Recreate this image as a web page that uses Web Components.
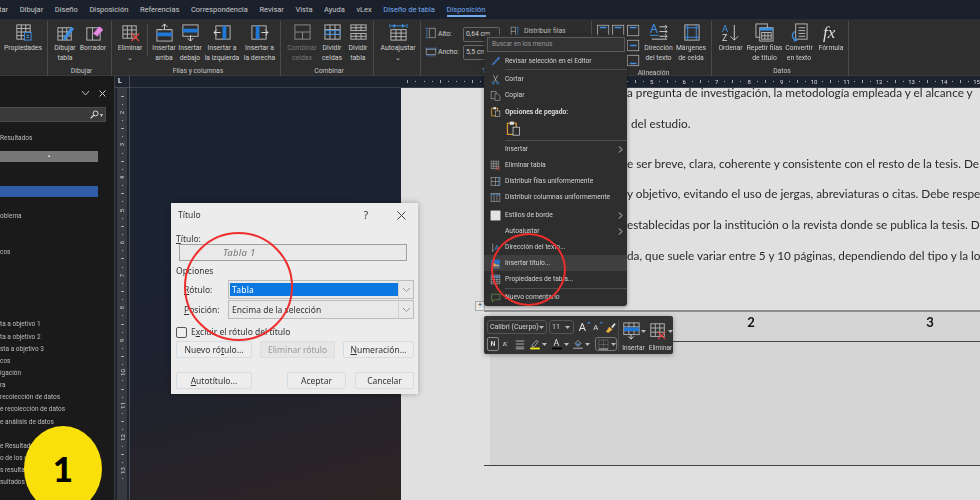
<!DOCTYPE html>
<html lang="es">
<head>
<meta charset="utf-8">
<title>Título</title>
<style>
  html, body { margin: 0; height: 100%; background: #1a1a1a; overflow: hidden; }
  body { font-family: Roboto, "Noto Sans", sans-serif; }
</style>
</head>
<body>
<word-app></word-app>
<script>
// little svg helpers, icons are all on a 20x20 box
const G = '#b9b9b9', B = '#3f8fe0', R = '#e5403a';
function grid(x, y, w, h, c, r, col) {
  let s = `<rect x="${x}" y="${y}" width="${w}" height="${h}" fill="none" stroke="${col}"/>`;
  for (let i = 1; i < c; i++) s += `<path d="M${x + w * i / c} ${y}v${h}" stroke="${col}"/>`;
  for (let i = 1; i < r; i++) s += `<path d="M${x} ${y + h * i / r}h${w}" stroke="${col}"/>`;
  return s;
}
const X = (x, y, n) => `<path d="M${x} ${y}l${n} ${n}M${x + n} ${y}l${-n} ${n}" stroke="${R}" stroke-width="1.3"/>`;
const ICONS = {
  props: grid(3, 2, 14, 15, 3, 4, G) + `<rect x="11" y="10" width="7" height="8" fill="#2e2e2e" stroke="${B}"/><path d="M13 13h3M13 15h3" stroke="${B}"/>`,
  draw: grid(2, 5, 14, 13, 3, 3, G) + `<path d="M8 15L16 4l3 2-8 11-3.4 1z" fill="${B}"/>`,
  eraser: `<rect x="3" y="5" width="14" height="13" fill="none" stroke="${G}"/><path d="M9 5v13" stroke="${G}"/><path d="M10 11l6-7 4 3-6 7z" fill="#e58fe0" stroke="#c868c8"/>`,
  del: grid(2, 3, 14, 13, 3, 3, G) + X(11, 11, 8),
  insUp: `<path d="M10 1l-3 3M10 1l3 3M10 1v6M3 7h4M13 7h4" stroke="#ddd" fill="none"/>` + `<rect x="2" y="7" width="16" height="12" fill="none" stroke="${G}"/><rect x="2" y="10" width="16" height="4" fill="#1f78d8"/>`,
  insDown: `<rect x="2" y="2" width="16" height="12" fill="none" stroke="${G}"/><rect x="2" y="6" width="16" height="4" fill="#1f78d8"/><path d="M10 19l-3-3M10 19l3-3M10 19v-6" stroke="#ddd" fill="none"/>`,
  insL: `<rect x="3" y="3" width="15" height="14" fill="none" stroke="${G}"/><rect x="10" y="3" width="4" height="14" fill="#1f78d8"/><path d="M1 10l3-3M1 10l3 3M1 10h7" stroke="#ddd" fill="none"/>`,
  insR: `<rect x="2" y="3" width="15" height="14" fill="none" stroke="${G}"/><rect x="6" y="3" width="4" height="14" fill="#1f78d8"/><path d="M19 10l-3-3M19 10l-3 3M19 10h-7" stroke="#ddd" fill="none"/>`,
  merge: `<rect x="2" y="2" width="16" height="15" fill="none" stroke="#8a8a8a"/><path d="M2 9.5h16M10 9.5V17" stroke="#8a8a8a"/>`,
  split: grid(2, 2, 16, 15, 3, 3, G) + `<path d="M2 8h16v4H2zM7 8v4M13 8v4" fill="none" stroke="${B}"/>`,
  splitT: grid(2, 2, 16, 6, 3, 2, G) + grid(2, 11, 16, 6, 3, 2, G),
  fit: grid(2, 7, 16, 11, 3, 3, G) + `<path d="M1 1v4M19 1v4M2 3h16M4 3l2-1.5v3zM16 3l-2-1.5v3z" stroke="${B}" fill="${B}"/>`,
  dir: `<text x="1" y="11" font-size="13" fill="${B}" font-family="Noto Sans">A</text><path d="M1 13h9" stroke="${B}"/><path d="M11 4h8M11 9h8M11 14h8M3 17h16M17 2l2 2-2 2M17 7l2 2-2 2M17 12l2 2-2 2" stroke="#ccc" fill="none"/>`,
  margins: `<rect x="3" y="2" width="15" height="16" fill="none" stroke="${G}"/><path d="M6 2v16M15 2v16M3 5h15M3 15h15" stroke="${B}"/>`,
  sort: `<text font-size="10" font-family="Noto Sans"><tspan x="1" y="9" fill="${B}">A</tspan><tspan x="1" y="19" fill="#ddd">Z</tspan></text><path d="M14 2v16M10 14l4 4 4-4" stroke="#ccc" fill="none"/>`,
  repeat: `<rect x="1" y="1" width="12" height="14" fill="none" stroke="${G}"/><rect x="5" y="5" width="14" height="14" fill="#2e2e2e" stroke="${G}"/><rect x="5" y="5" width="14" height="3" fill="${B}"/>` + grid(7, 10, 10, 7, 3, 2, G),
  convert: `<rect x="6" y="1" width="12" height="16" fill="none" stroke="${G}"/><path d="M9 5h7M9 8h7M9 11h7M9 14h7" stroke="${G}"/><path d="M5 9c-4 3-3 8 2 9M5 15l2 3-3 1" stroke="${B}" fill="none" stroke-width="1.3"/>`,
  fx: `<text x="1" y="16" font-size="18" font-style="italic" fill="#ddd" font-family="Liberation Serif">fx</text>`,
  alto: `<path d="M1 2h4M1 18h4M3 2v16" stroke="${B}"/><rect x="7" y="2" width="10" height="16" fill="none" stroke="${G}"/>`,
  ancho: `<path d="M2 4v3M18 4v3M2 5.500h16" stroke="${B}"/><rect x="2" y="7" width="16" height="9" fill="none" stroke="${G}"/><path d="M2 18h16" stroke="${B}"/>`,
  dist: `<rect x="2" y="2" width="8" height="16" fill="none" stroke="${G}"/><path d="M2 10h8" stroke="${G}"/><path d="M14 2v16M12 4l2-2 2 2M12 16l2 2 2-2" stroke="${B}" fill="none"/>`,
  alignTop: `<rect x="2" y="3" width="15" height="14" fill="none" stroke="${G}"/><path d="M5 6h9" stroke="${B}" stroke-width="2"/>`,
  alignMid: `<rect x="2" y="3" width="15" height="14" fill="none" stroke="${G}"/><path d="M5 10h9" stroke="${B}" stroke-width="2"/>`,
  alignBot: `<rect x="2" y="3" width="15" height="14" fill="none" stroke="${G}"/><path d="M5 14h9" stroke="${B}" stroke-width="2"/>`,
  // context menu
  pen: `<path d="M2 18L15 4c1-1 3 0 3 2L8 17z" fill="#3a78c8"/><path d="M5 9l6 6M8 6l6 6" stroke="#2e2e2e"/>`,
  cut: `<path d="M6 2l6 12M14 2L8 14" stroke="#ddd" fill="none"/><circle cx="6" cy="16" r="2.200" fill="none" stroke="${B}" stroke-width="1.3"/><circle cx="14" cy="16" r="2.200" fill="none" stroke="${B}" stroke-width="1.3"/>`,
  copy: `<rect x="2" y="3" width="9" height="13" fill="none" stroke="${G}"/><path d="M9 7h5l4 4v8H9z" fill="#2e2e2e" stroke="${G}"/>`,
  paste: `<rect x="3" y="4" width="11" height="14" fill="none" stroke="#e4a432" stroke-width="1.4"/><rect x="6" y="2" width="5" height="4" fill="#ddd"/><rect x="10" y="9" width="8" height="10" fill="#2e2e2e" stroke="#ccc"/>`,
  delT: grid(2, 2, 14, 14, 3, 3, G) + X(11, 12, 7),
  rows: grid(2, 3, 16, 14, 2, 2, G) + `<path d="M16 3v14M14 5l2-2 2 2M14 15l2 2 2-2" stroke="${B}" fill="none"/>`,
  cols: grid(2, 3, 16, 14, 3, 1, G) + `<path d="M2 5h16M4 3L2 5l2 2M16 3l2 2-2 2" stroke="${B}" fill="none"/>`,
  border: `<rect x="1" y="1" width="18" height="18" fill="#e3e3e3"/>`,
  textDir: `<path d="M5 3v14M3 15l2 2 2-2" stroke="#ccc" fill="none"/><text x="8" y="15" font-size="13" fill="${B}" font-family="Noto Sans">A</text>`,
  pic: `<rect x="2" y="3" width="16" height="13" fill="#2b6fc0"/><path d="M3 15l5-6 4 4 2-2 3 4z" fill="#e9a23b"/><path d="M2 18h16" stroke="${G}"/>`,
  tprops: grid(2, 2, 16, 16, 3, 4, G) + `<path d="M2 5h16" stroke="${B}" stroke-width="2"/>`,
  note: `<path d="M3 4h15v10H8l-4 4v-4H3z" fill="none" stroke="#7fb65a"/>`,
  // mini toolbar
  grow: `<text x="1" y="16" font-size="16" fill="#ddd" font-family="Noto Sans">A</text><path d="M13 5l2.500-3 2.500 3z" fill="${B}"/>`,
  shrink: `<text x="2" y="15" font-size="13" fill="#ddd" font-family="Noto Sans">A</text><path d="M13 2l2.500 3 2.500-3z" fill="${B}"/>`,
  brush: `<path d="M3 17l5-8 5 4-6 5z" fill="#eab03d"/><path d="M11 9l5-6 2 2-5 6z" fill="#ddd"/>`,
  para: `<path d="M3 5h14M3 10h14M3 15h14M3 18h14" stroke="#ccc" stroke-width="1.300"/>`,
  mark: `<path d="M5 12l7-8 3 2-6 8-4 1z" fill="none" stroke="#ddd"/><rect x="2" y="16" width="16" height="3" fill="#f5ee18"/>`,
  colorA: `<text x="4" y="14" font-size="15" fill="#ddd" font-family="Noto Sans">A</text><rect x="2" y="16" width="16" height="3" fill="#000"/>`,
  fill: `<path d="M10 4l5 5-5 5-5-5z" fill="none" stroke="#ddd"/><path d="M6 9h8l-4 4z" fill="${B}"/><path d="M2 17h16" stroke="#bbb" stroke-width="1.500"/>`,
  borderBox: grid(3, 3, 14, 14, 2, 2, '#6b6b6b') + `<path d="M3 17h14" stroke="#bbb" stroke-width="1.500"/>`,
  miniIns: grid(2, 1, 17, 13, 3, 3, G) + `<rect x="2" y="6" width="17" height="4" fill="#1f78d8"/><path d="M10 19l-3-3M10 19l3-3M10 19v-5" stroke="#ddd" fill="none"/>`,
  miniDel: grid(2, 2, 15, 14, 3, 3, G) + X(10, 11, 8),
  search: `<circle cx="12" cy="8" r="4.500" fill="none" stroke="#ddd" stroke-width="1.800"/><path d="M9 11l-6 6" stroke="#ddd" stroke-width="2.400"/>`,
};
const icon = (name, size) => `<svg width="${size}" height="${size}" viewBox="0 0 20 20" style="flex:none">${ICONS[name]}</svg>`;
const chev = '<svg width="9" height="6" viewBox="0 0 9 6"><path d="M1 1l3.500 3.500L8 1" fill="none" stroke="#9a9a9a"/></svg>';

class RbBtn extends HTMLElement {
  connectedCallback() {
    const size = this.getAttribute('size') || 19;
    this.attachShadow({ mode: 'open' }).innerHTML = `
      <style>
        :host { display: flex; flex-direction: column; align-items: center; flex: none; text-align: center; line-height: 9.500px; }
        .pic { height: 20px; margin-bottom: 1px; }
        :host([off]) { color: #777; }
      </style>
      <div class="pic">${icon(this.getAttribute('icon'), size)}</div>
      <slot></slot>`;
  }
}
customElements.define('rb-btn', RbBtn);

class RbGroup extends HTMLElement {
  connectedCallback() {
    this.attachShadow({ mode: 'open' }).innerHTML = `
      <style>
        :host { display: flex; flex-direction: column; flex: none; box-sizing: border-box; height: 55px; margin-top: 2px; border-right: 1px solid #4a4a4a; padding: 2px 0 0 4px; }
        .row { display: flex; flex: 1; }
        .name { height: 10px; line-height: 11px; text-align: center; color: #c4c4c4; white-space: nowrap; }
      </style>
      <div class="row"><slot></slot></div>
      <div class="name">${this.getAttribute('name') || ''}</div>`;
  }
}
customElements.define('rb-group', RbGroup);

class WordTabs extends HTMLElement {
  connectedCallback() {
    const tabs = ['tar', 'Dibujar', 'Diseño', 'Disposición', 'Referencias', 'Correspondencia', 'Revisar', 'Vista', 'Ayuda', 'vLex'];
    this.attachShadow({ mode: 'open' }).innerHTML = `
      <style>
        :host { display: flex; gap: 11.600px; height: 19px; flex: none; background: #1a212d; color: #c9c9c9; font-size: 7.500px; line-height: 20px; margin-left: -1px; }
        span { white-space: nowrap; }
        .ctx { color: #74a9ee; }
        .on { box-shadow: inset 0 -2px 0 #74a9ee; height: 17px; }
      </style>
      ${tabs.map(t => `<span>${t}</span>`).join('')}
      <span class="ctx">Diseño de tabla</span><span class="ctx on">Disposición</span>`;
  }
}
customElements.define('word-tabs', WordTabs);

class WordRibbon extends HTMLElement {
  connectedCallback() {
    this.attachShadow({ mode: 'open' }).innerHTML = `
      <style>
        :host { display: flex; height: 57px; flex: none; background: #2e2e2e; color: #d0d0d0; font-size: 6.800px; box-shadow: inset 0 -1px 0 #3a3a3a; }
        .vs { width: 1px; height: 32px; background: #4a4a4a; flex: none; margin: 1px 3px 0; }
        .size { display: grid; grid-template-columns: 12px 24px 37px 1fr; grid-auto-rows: 18px; align-items: center; padding-top: 2px; gap: 0 1px; }
        .inp { border: 1px solid #666; border-radius: 2px; height: 13px; line-height: 13px; padding-left: 2px; white-space: nowrap; overflow: hidden; }
        .dist { color: #bbb; display: flex; gap: 3px; align-items: center; padding-left: 9px; margin-top: -6px; white-space: nowrap; }
        .aligns { display: grid; grid-template-columns: repeat(3, 15px); grid-auto-rows: 15px; }
        .aligns svg { display: block; }
      </style>
      <rb-group style="width:48px"><rb-btn icon="props" style="width:40px;margin-left:-1px">Propiedades</rb-btn></rb-group>
      <rb-group name="Dibujar" style="width:64px"><rb-btn icon="draw" style="width:26px">Dibujar tabla</rb-btn><rb-btn icon="eraser" style="width:30px">Borrador</rb-btn></rb-group>
      <rb-group name="Filas y columnas" style="width:169px"><rb-btn icon="del" style="width:28px">Eliminar<br>⌄</rb-btn><div class="vs"></div>
        <rb-btn icon="insUp" style="width:26px">Insertar arriba</rb-btn><rb-btn icon="insDown" style="width:26px">Insertar debajo</rb-btn><rb-btn icon="insL" style="width:38px">Insertar a<br>la izquierda</rb-btn><rb-btn icon="insR" style="width:37px">Insertar a<br>la derecha</rb-btn></rb-group>
      <rb-group name="Combinar" style="width:93px"><rb-btn icon="merge" off style="width:34px">Combinar celdas</rb-btn><rb-btn icon="split" style="width:26px">Dividir celdas</rb-btn><rb-btn icon="splitT" style="width:26px">Dividir tabla</rb-btn></rb-group>
      <rb-group style="width:47px"><rb-btn icon="fit" style="width:40px">Autoajustar<br>⌄</rb-btn></rb-group>
      <rb-group name="Tamaño de celda" style="width:171px">
        <div class="size">
          <span>${icon('alto', 12)}</span><span>Alto:</span><span class="inp">0,64 cm</span><span class="dist">${icon('dist', 11)}Distribuir filas</span>
          <span>${icon('ancho', 12)}</span><span>Ancho:</span><span class="inp">5,5 cm</span><span></span>
        </div>
      </rb-group>
      <rb-group name="Alineación" style="width:120px">
        <div class="aligns">
          ${['alignTop','alignTop','alignTop','alignMid','alignMid','alignMid','alignBot','alignBot','alignBot'].map(n => icon(n, 15)).join('')}
        </div>
        <rb-btn icon="dir" style="width:35px">Dirección del texto</rb-btn><rb-btn icon="margins" style="width:30px">Márgenes de celda</rb-btn>
      </rb-group>
      <rb-group name="Datos" style="width:137px"><rb-btn icon="sort" style="width:29px">Ordenar</rb-btn><rb-btn icon="repeat" style="width:39px">Repetir filas de título</rb-btn><rb-btn icon="convert" style="width:30px">Convertir en texto</rb-btn><rb-btn icon="fx" style="width:34px">Fórmula</rb-btn></rb-group>`;
  }
}
customElements.define('word-ribbon', WordRibbon);

class NavPane extends HTMLElement {
  connectedCallback() {
    const lines = ['ta a objetivo 1', 'ta a objetivo 2', 'sta a objetivo 3', 'cos', 'igación', 'ra', 'recolección de datos', 'e recolección de datos', 'e análisis de datos', '', 'e Resultados', 'o de los datos', 's resultados', 'sultados'];
    this.attachShadow({ mode: 'open' }).innerHTML = `
      <style>
        :host { display: flex; flex-direction: column; width: 115px; flex: none; background: #1a1a1a; color: #bdbdbd; font-size: 6.500px; box-sizing: border-box; border-right: 1px solid #3d3d3d; }
        .head { display: flex; justify-content: flex-end; align-items: center; gap: 9px; height: 16px; margin-top: 9px; padding-right: 8px; }
        .find { display: flex; justify-content: flex-end; align-items: center; height: 13px; width: 105px; margin-top: 7px; background: #3a3a3a; box-shadow: 0 0 0 1px #4c4c4c; padding-right: 2px; box-sizing: border-box; font-size: 6px; color: #ccc; }
        .item { height: 12.150px; line-height: 12px; white-space: nowrap; }
        .bar { width: 98px; height: 11px; margin-top: 7px; }
        .gray { background: #777; color: #eee; text-align: center; line-height: 10px; font-size: 6px; }
        .blue { background: #2f5da6; margin-top: 24px; }
      </style>
      <div class="head">
        <svg width="9" height="7" viewBox="0 0 9 7"><path d="M1 1l3.500 4L8 1" fill="none" stroke="#bbb"/></svg>
        <svg width="7" height="7" viewBox="0 0 7 7"><path d="M.5.5l6 6M6.500.5l-6 6" stroke="#ccc"/></svg>
      </div>
      <div class="find">${icon('search', 11)}▾</div>
      <div class="item" style="margin-top:11px">Resultados</div>
      <div class="bar gray">▪</div>
      <div class="bar blue"></div>
      <div class="item" style="margin-top:13px">oblema</div>
      <div class="item" style="margin-top:24px">cos</div>
      <div style="height:60px"></div>
      ${lines.map(t => `<div class="item">${t}</div>`).join('')}`;
  }
}
customElements.define('nav-pane', NavPane);

class VRuler extends HTMLElement {
  connectedCallback() {
    let cells = '';
    for (let i = 0; i < 48; i++) {
      const c = i % 4 === 2 ? `<b>${(i - 2) / 4 + 2}</b>` : i % 4 === 0 ? '<i class="d"></i>' : '<i></i>';
      cells += `<div>${c}</div>`;
    }
    this.attachShadow({ mode: 'open' }).innerHTML = `
      <style>
        :host { display: block; width: 15px; flex: none; background: #1f2530; box-sizing: border-box; border-right: 1px solid #4a4d55; overflow: hidden; }
        .corner { height: 12px; box-sizing: border-box; border-bottom: 1px solid #4a4d55; color: #eee; font-size: 7px; line-height: 11px; padding-left: 3px; font-weight: 700; }
        .strip { width: 10px; margin-left: 2px; height: 420px; background: #383a40; padding-top: 4px; }
        .strip div { height: 8.150px; display: flex; align-items: center; justify-content: center; }
        i { width: 1px; height: 1px; background: #aaa; display: block; }
        i.d { width: 3px; }
        b { font-size: 6px; font-weight: 400; color: #ccc; transform: rotate(-90deg); }
      </style>
      <div class="corner">L</div>
      <div class="strip">${cells}</div>`;
  }
}
customElements.define('v-ruler', VRuler);

class HRuler extends HTMLElement {
  connectedCallback() {
    let cells = '';
    for (let i = 0; i < 72; i++) {
      const n = (i - 30) / 4 + 5;
      const c = i % 4 === 2 ? (n >= 5 ? `<b>${n}</b>` : '<i></i>') : i % 4 === 0 ? '<i class="d"></i>' : '<i></i>';
      cells += `<div>${c}</div>`;
    }
    this.attachShadow({ mode: 'open' }).innerHTML = `
      <style>
        :host { display: flex; height: 12px; flex: none; background: #1b2230; box-sizing: border-box; border-bottom: 1px solid #3a3e48; overflow: hidden; }
        .gap { flex: 0 0 273.800px; }
        .tick { display: flex; flex: none; }
        .tick div { width: 8.137px; height: 11px; display: flex; align-items: center; justify-content: center; flex: none; }
        i { width: 1px; height: 1px; background: #a8a8a8; display: block; }
        i.d { height: 3px; }
        b { font-size: 6px; font-weight: 400; color: #ddd; }
      </style>
      <div class="gap"></div><div class="tick">${cells}</div>`;
  }
}
customElements.define('h-ruler', HRuler);

class DocPage extends HTMLElement {
  connectedCallback() {
    this.attachShadow({ mode: 'open' }).innerHTML = `
      <style>
        :host { display: block; flex: 1; min-width: 0; background: #e0e0e0; color: #2a2a2a; font: 11.750px/30.700px Lato, "Liberation Sans", sans-serif; overflow: hidden; white-space: nowrap; }
        p { margin: 0; padding-left: 226px; }
        .first { margin-top: -10px; }
        .tbl { margin: 38px 0 0 83px; border-top: 2px solid #8e8e8e; }
        .shade { margin-left: 6px; background: #d4d4d4; height: 153px; }
        .hdr { display: grid; grid-template-columns: 171.500px 179px 179px; height: 30px; border-bottom: 1px solid #444; box-sizing: border-box; font-weight: 700; font-size: 13px; color: #111; line-height: 20px; text-align: center; }
        .hdr :first-child { padding-right: 7px; }
        .end { height: 1px; background: #444; }
      </style>
      <p class="first">a pregunta de investigación, la metodología empleada y el alcance y</p>
      <p style="padding-left:230px">del estudio.</p>
      <p style="margin-top:9.300px">e ser breve, clara, coherente y consistente con el resto de la tesis. De</p>
      <p>y objetivo, evitando el uso de jergas, abreviaturas o citas. Debe respe</p>
      <p>establecidas por la institución o la revista donde se publica la tesis. De</p>
      <p>da, que suele variar entre 5 y 10 páginas, dependiendo del tipo y la lo</p>
      <div class="tbl">
        <div class="shade"><div class="hdr"><span>1</span><span>2</span><span>3</span></div></div>
        <div class="end"></div>
      </div>`;
  }
}
customElements.define('doc-page', DocPage);

class CaptionDialog extends HTMLElement {
  connectedCallback() {
    this.attachShadow({ mode: 'open' }).innerHTML = `
      <style>
        :host { display: flex; flex-direction: column; box-sizing: border-box; width: 247px; height: 191px; padding: 0 4px 0 5px; background: #ececec; color: #333; font-family: "Noto Sans", sans-serif; font-size: 8.500px; line-height: 12px; box-shadow: 0 0 6px rgba(0,0,0,.3); }
        u { text-underline-offset: 1px; }
        .title { display: flex; align-items: center; height: 22px; padding: 1px 8px 0 2px; }
        .title span { flex: 1; }
        .title b { font-weight: 400; margin-right: 29px; font-size: 10px; }
        .lab { margin-top: 7px; height: 12px; }
        .inp { box-sizing: border-box; margin: -1px 7px 0 3px; height: 17px; border: 1px solid #a0a0a0; background: #e9e9e9; color: #777; font-style: italic; font-size: 9.500px; letter-spacing: .3px; line-height: 15px; padding-left: 43px; }
        .opts { margin-top: 2px; height: 16px; line-height: 16px; }
        .row { display: flex; align-items: center; height: 19px; margin-top: 1px; padding-left: 8px; }
        .row label { width: 44px; flex: none; }
        .sel { flex: 1; box-sizing: border-box; height: 19px; display: flex; border: 1px solid #bcbcbc; background: #e9e9e9; line-height: 17px; padding-left: 1px; align-items: center; }
        .sel span { flex: 1; padding-left: 2px; }
        .sel .hi { background: #0a78e0; color: #fff; height: 13px; line-height: 13px; letter-spacing: .2px; }
        .sel .arr { flex: none; width: 14px; padding: 0; display: flex; align-items: center; justify-content: center; border-left: 1px solid #d0d0d0; height: 17px; }
        .chk { display: flex; align-items: center; gap: 4px; margin-top: 7px; height: 12px; }
        .chk i { width: 9px; height: 9px; border: 1px solid #555; border-radius: 2px; background: #eee; }
        .btns { display: flex; height: 17px; }
        button { font: inherit; color: #333; background: #ededed; border: 1px solid #d4dce4; border-radius: 2px; padding: 0; height: 17px; flex: none; }
        button[disabled] { color: #999; border-color: #ddd; background: #e6e6e6; }
      </style>
      <div class="title"><span>Título</span><b>?</b><svg width="9" height="9" viewBox="0 0 9 9"><path d="M.5.5l8 8M8.500.5l-8 8" stroke="#444"/></svg></div>
      <div class="lab"><u>T</u>ítulo:</div>
      <div class="inp">Tabla 1</div>
      <div class="opts">Opciones</div>
      <div class="row"><label><u>R</u>ótulo:</label><div class="sel"><span class="hi">Tabla</span><span class="arr">${chev}</span></div></div>
      <div class="row"><label><u>P</u>osición:</label><div class="sel"><span>Encima de la selección</span><span class="arr">${chev}</span></div></div>
      <div class="chk"><i></i><span>E<u>x</u>cluir el rótulo del título</span></div>
      <div class="btns" style="margin-top:3px;gap:8px"><button style="width:76px">Nuevo ró<u>t</u>ulo...</button><button disabled style="width:75px">Eliminar rótulo</button><button style="width:71px"><u>N</u>umeración...</button></div>
      <div class="btns" style="margin-top:14px"><button style="width:76px"><u>A</u>utotítulo...</button><button style="width:59px;margin-left:35px">Aceptar</button><button style="width:59px;margin-left:9px">Cancelar</button></div>`;
  }
}
customElements.define('caption-dialog', CaptionDialog);

class MenuItem extends HTMLElement {
  connectedCallback() {
    const ic = this.getAttribute('icon');
    const more = this.hasAttribute('more');
    this.attachShadow({ mode: 'open' }).innerHTML = `
      <style>
        :host { display: flex; align-items: center; height: 16px; flex: none; white-space: nowrap; padding-right: 4px; }
        :host([hot]) { background: #3f3f3f; }
        .ic { width: 21px; flex: none; display: flex; justify-content: center; padding-left: 2px; box-sizing: border-box; }
        .tx { flex: 1; }
      </style>
      <div class="ic">${ic ? icon(ic, 11) : ''}</div><div class="tx"><slot></slot></div>${more ? '<svg width="5" height="7" viewBox="0 0 5 7"><path d="M1 .5l3 3-3 3" fill="none" stroke="#ccc"/></svg>' : ''}`;
  }
}
customElements.define('menu-item', MenuItem);

class ContextMenu extends HTMLElement {
  connectedCallback() {
    this.attachShadow({ mode: 'open' }).innerHTML = `
      <style>
        :host { display: flex; flex-direction: column; box-sizing: border-box; width: 143px; height: 271px; background: #2e2e2e; color: #d2d2d2; font-size: 6.700px; border-radius: 3px; padding-top: 2px; box-shadow: 0 1px 4px rgba(0,0,0,.4); }
        .find { margin: 0 2px 0 3px; height: 15px; flex: none; box-sizing: border-box; border: 1px solid #5a5a5a; background: #333; color: #999; line-height: 13px; padding-left: 4px; font-size: 6.500px; }
        .hr { height: 1px; background: #4d4d4d; margin-left: 21px; flex: none; }
        b { font-weight: 700; color: #ddd; }
        .paste { height: 20px; padding-left: 21px; flex: none; }
      </style>
      <div class="find">Buscar en los menús</div>
      <menu-item icon="pen" style="height:17px">Revisar selección en el Editor</menu-item>
      <div class="hr"></div>
      <menu-item icon="cut" style="margin-top:1px">Cortar</menu-item>
      <menu-item icon="copy">Copiar</menu-item>
      <menu-item icon="paste" style="height:17px"><b>Opciones de pegado:</b></menu-item>
      <div class="paste">${icon('paste', 16)}</div>
      <div class="hr"></div>
      <menu-item more>Insertar</menu-item>
      <menu-item icon="delT">Eliminar tabla</menu-item>
      <menu-item icon="rows">Distribuir filas uniformemente</menu-item>
      <menu-item icon="cols">Distribuir columnas uniformemente</menu-item>
      <menu-item icon="border" more style="margin-top:2px">Estilos de borde</menu-item>
      <menu-item more>Autoajustar</menu-item>
      <menu-item icon="textDir">Dirección del texto...</menu-item>
      <menu-item icon="pic" hot>Insertar título...</menu-item>
      <menu-item icon="tprops">Propiedades de tabla...</menu-item>
      <div class="hr" style="margin-top:1px"></div>
      <menu-item icon="note">Nuevo comentario</menu-item>`;
  }
}
customElements.define('context-menu', ContextMenu);

class MiniToolbar extends HTMLElement {
  connectedCallback() {
    const caret = '<svg width="5" height="3" viewBox="0 0 5 3" style="flex:none"><path d="M0 0h5L2.500 3z" fill="#bbb"/></svg>';
    const sp = n => `<span style="width:${n}px;flex:none"></span>`;
    this.attachShadow({ mode: 'open' }).innerHTML = `
      <style>
        :host { display: flex; box-sizing: border-box; width: 189px; height: 38px; background: #333; color: #d4d4d4; font-size: 7px; border-radius: 2px; padding: 4px 0 0 3px; box-shadow: 0 1px 5px rgba(0,0,0,.3); }
        .left { display: flex; flex-direction: column; gap: 3px; width: 131px; flex: none; border-right: 1px solid #4b4b4b; height: 31px; }
        .r { display: flex; align-items: center; height: 15px; }
        .combo { box-sizing: border-box; display: flex; justify-content: space-between; align-items: center; border: 1px solid #555; border-radius: 3px; height: 14px; padding: 0 3px 0 2px; white-space: nowrap; flex: none; }
        .n { box-sizing: border-box; width: 12px; height: 14px; flex: none; border: 1px solid #888; border-radius: 2px; text-align: center; line-height: 12px; font-weight: 700; }
        .k { font-style: italic; width: 12px; flex: none; text-align: center; font-family: "Liberation Serif", serif; }
        .sq { display: flex; gap: 1px; align-items: center; justify-content: center; border: 1px solid #777; border-radius: 3px; height: 14px; width: 22px; flex: none; box-sizing: border-box; }
        .act { display: flex; flex-direction: column; align-items: center; width: 27px; flex: none; gap: 2px; line-height: 8px; font-size: 6.500px; }
        .act span { display: flex; align-items: center; height: 22px; gap: 1px; }
      </style>
      <div class="left">
        <div class="r">
          <div class="combo" style="width:60px">Calibri (Cuerpo)${caret}</div>${sp(2)}
          <div class="combo" style="width:25px">11${caret}</div>${sp(4)}
          ${icon('grow', 14)}${icon('shrink', 12)}${icon('brush', 13)}
        </div>
        <div class="r">
          <div class="n">N</div><div class="k">K</div>${sp(3)}${icon('para', 12)}${sp(3)}
          ${icon('mark', 12)}${sp(1)}${caret}${sp(4)}${icon('colorA', 12)}${sp(1)}${caret}${sp(3)}${icon('fill', 12)}${sp(1)}${caret}${sp(5)}
          <div class="sq">${icon('borderBox', 13)}${caret}</div>
        </div>
      </div>
      <div class="act" style="margin-left:1px"><span>${icon('miniIns', 18)}${caret}</span>Insertar</div>
      <div class="act"><span>${icon('miniDel', 18)}${caret}</span>Eliminar</div>`;
  }
}
customElements.define('mini-toolbar', MiniToolbar);

class WordApp extends HTMLElement {
  connectedCallback() {
    this.attachShadow({ mode: 'open' }).innerHTML = `
      <style>
        :host { display: flex; flex-direction: column; position: relative; width: 980px; height: 500px; overflow: hidden; filter: blur(.35px); }
        .main { display: flex; flex: 1; min-height: 0; }
        .work { display: flex; flex-direction: column; flex: 1; min-width: 0; }
        .stage { display: flex; flex: 1; min-height: 0; }
        .back { flex: 0 0 271px; background: linear-gradient(165deg, #1b2331 0%, #1c2230 55%, #2e2425 100%); }
        .float { position: absolute; }
        .ring { position: absolute; box-sizing: border-box; border: 2px solid #ee2d2d; border-radius: 50%; }
        .badge { position: absolute; left: 24px; top: 426px; width: 78px; height: 86px; border-radius: 50%; background: #f9e00a; color: #000; display: flex; justify-content: center; font: 900 35px/84px Lato, sans-serif; }
        .handle { position: absolute; left: 475px; top: 301px; width: 8px; height: 8px; border: 1px solid #aaa; background: #e8e8e8; color: #444; font-size: 7px; line-height: 7px; text-align: center; }
      </style>
      <word-tabs></word-tabs>
      <word-ribbon></word-ribbon>
      <div class="main">
        <nav-pane></nav-pane>
        <v-ruler></v-ruler>
        <div class="work">
          <h-ruler></h-ruler>
          <div class="stage"><div class="back"></div><doc-page></doc-page></div>
        </div>
      </div>
      <div class="handle">+</div>
      <context-menu class="float" style="left:484px;top:35px"></context-menu>
      <mini-toolbar class="float" style="left:484px;top:316px"></mini-toolbar>
      <caption-dialog class="float" style="left:171px;top:203px"></caption-dialog>
      <div class="ring" style="left:184px;top:232px;width:109px;height:109px"></div>
      <div class="ring" style="left:491px;top:233px;width:75px;height:73px"></div>
      <div class="badge">1</div>`;
  }
}
customElements.define('word-app', WordApp);
</script>
</body>
</html>
